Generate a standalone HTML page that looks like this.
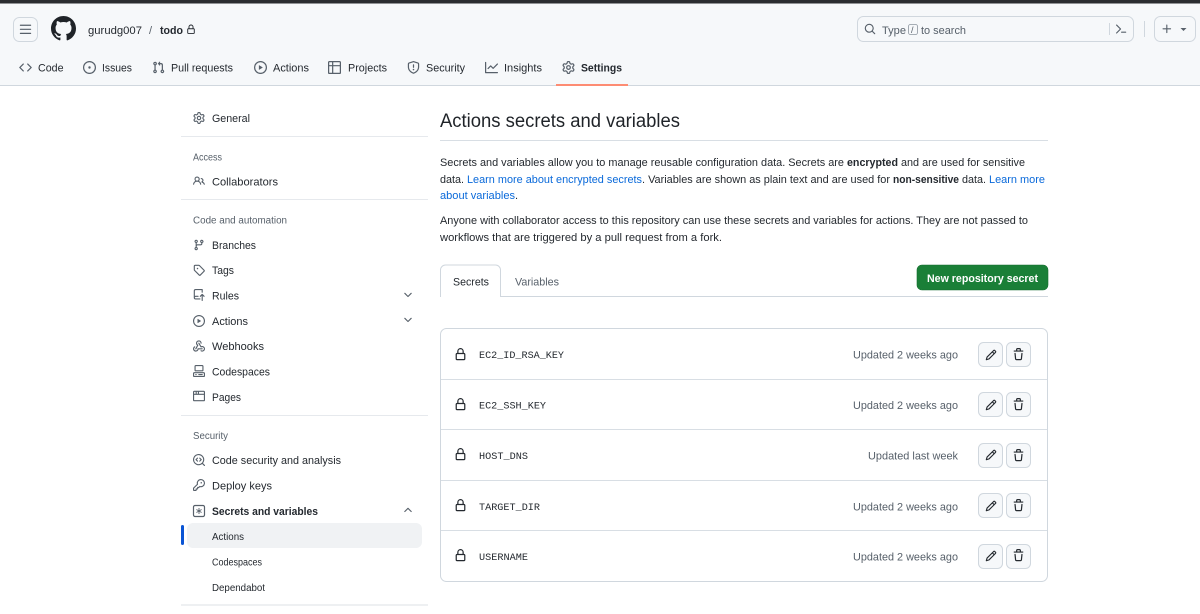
<!DOCTYPE html>
<html><head><meta charset="utf-8"><title>Actions secrets and variables</title>
<style>
html,body{margin:0;padding:0;width:1200px;height:614px;overflow:hidden;background:#fff}
svg{display:block}
text{font-family:"Liberation Sans",sans-serif;font-size:11px;fill:#24292f}
.m{fill:#57606a}
.b{font-weight:bold}
.l{fill:#0969da}
.h{font-size:10px;font-weight:bold;fill:#57606a}
.k{font-family:"Liberation Mono",monospace;font-size:10px}
.i{fill:#57606a}
.d{fill:#24292f}
</style></head><body>
<svg xmlns="http://www.w3.org/2000/svg" width="1200" height="614" viewBox="0 0 1200 614">
<defs>
<symbol id="gear" viewBox="0 0 16 16"><path d="M8 0a8.2 8.2 0 0 1 .701.031C9.444.095 9.99.645 10.16 1.29l.288 1.107c.018.066.079.158.212.224.231.114.454.243.668.386.123.082.233.09.299.071l1.103-.303c.644-.176 1.392.021 1.82.63.27.385.506.792.704 1.218.315.675.111 1.422-.364 1.891l-.814.806c-.049.048-.098.147-.088.294.016.257.016.515 0 .772-.01.147.038.246.088.294l.814.806c.475.469.679 1.216.364 1.891a7.977 7.977 0 0 1-.704 1.217c-.428.61-1.176.807-1.82.63l-1.102-.302c-.067-.019-.177-.011-.3.071a5.909 5.909 0 0 1-.668.386c-.133.066-.194.158-.211.224l-.29 1.106c-.168.646-.715 1.196-1.458 1.26a8.006 8.006 0 0 1-1.402 0c-.743-.064-1.289-.614-1.458-1.26l-.289-1.106c-.018-.066-.079-.158-.212-.224a5.738 5.738 0 0 1-.668-.386c-.123-.082-.233-.09-.299-.071l-1.103.303c-.644.176-1.392-.021-1.82-.63a8.12 8.12 0 0 1-.704-1.218c-.315-.675-.111-1.422.363-1.891l.815-.806c.05-.048.098-.147.088-.294a6.214 6.214 0 0 1 0-.772c.01-.147-.038-.246-.088-.294l-.815-.806C.635 6.045.431 5.298.746 4.623a7.92 7.92 0 0 1 .704-1.217c.428-.61 1.176-.807 1.82-.63l1.102.302c.067.019.177.011.3-.071.214-.143.437-.272.668-.386.133-.066.194-.158.211-.224l.29-1.106C6.009.645 6.556.095 7.299.03 7.53.01 7.764 0 8 0Zm-.571 1.525c-.036.003-.108.036-.137.146l-.289 1.105c-.147.561-.549.967-.998 1.189-.173.086-.34.183-.5.29-.417.278-.97.423-1.529.27l-1.103-.303c-.109-.03-.175.016-.195.045-.22.312-.412.644-.573.99-.014.031-.021.11.059.19l.815.806c.411.406.562.957.53 1.456a4.709 4.709 0 0 0 0 .582c.032.499-.119 1.05-.53 1.456l-.815.806c-.081.08-.073.159-.059.19.162.346.353.677.573.989.02.03.085.076.195.046l1.102-.303c.56-.153 1.113-.008 1.53.27.161.107.328.204.501.29.447.222.85.629.997 1.189l.289 1.105c.029.109.101.143.137.146a6.6 6.6 0 0 0 1.142 0c.036-.003.108-.036.137-.146l.289-1.105c.147-.561.549-.967.998-1.189.173-.086.34-.183.5-.29.417-.278.97-.423 1.529-.27l1.103.303c.109.029.175-.016.195-.045.22-.313.411-.644.573-.99.014-.031.021-.11-.059-.19l-.815-.806c-.411-.406-.562-.957-.53-1.456a4.709 4.709 0 0 0 0-.582c-.032-.499.119-1.05.53-1.456l.815-.806c.081-.08.073-.159.059-.19a6.464 6.464 0 0 0-.573-.989c-.02-.03-.085-.076-.195-.046l-1.102.303c-.56.153-1.113.008-1.53-.27a4.44 4.44 0 0 0-.501-.29c-.447-.222-.85-.629-.997-1.189l-.289-1.105c-.029-.11-.101-.143-.137-.146a6.6 6.6 0 0 0-1.142 0ZM11 8a3 3 0 1 1-6 0 3 3 0 0 1 6 0ZM9.5 8a1.5 1.5 0 1 0-3.001.001A1.5 1.5 0 0 0 9.5 8Z"/></symbol>
<symbol id="mark" viewBox="0 0 16 16"><path d="M8 0c4.42 0 8 3.58 8 8a8.013 8.013 0 0 1-5.45 7.59c-.4.08-.55-.17-.55-.38 0-.27.01-1.13.01-2.2 0-.75-.25-1.23-.54-1.48 1.78-.2 3.65-.88 3.65-3.95 0-.88-.31-1.59-.82-2.15.08-.2.36-1.02-.08-2.12 0 0-.67-.22-2.2.82-.64-.18-1.32-.27-2-.27-.68 0-1.36.09-2 .27-1.53-1.03-2.2-.82-2.2-.82-.44 1.1-.16 1.92-.08 2.12-.51.56-.82 1.28-.82 2.15 0 3.06 1.86 3.75 3.64 3.95-.23.2-.44.55-.51 1.07-.46.21-1.61.55-2.33-.66-.15-.24-.6-.83-1.23-.82-.67.01-.27.38.01.53.34.19.73.9.82 1.13.16.45.68 1.31 2.69.94 0 .67.01 1.3.01 1.49 0 .21-.15.45-.55.38A7.995 7.995 0 0 1 0 8c0-4.42 3.58-8 8-8Z"/></symbol>
<symbol id="code" viewBox="0 0 16 16"><path d="m11.28 3.22 4.25 4.25a.75.75 0 0 1 0 1.06l-4.25 4.25a.749.749 0 0 1-1.275-.326.749.749 0 0 1 .215-.734L13.94 8l-3.72-3.72a.749.749 0 0 1 .326-1.275.749.749 0 0 1 .734.215Zm-6.56 0a.751.751 0 0 1 1.042.018.751.751 0 0 1 .018 1.042L2.06 8l3.72 3.72a.749.749 0 0 1-.326 1.275.749.749 0 0 1-.734-.215L.47 8.53a.75.75 0 0 1 0-1.06Z"/></symbol>
<symbol id="issue" viewBox="0 0 16 16"><path d="M8 9.5a1.5 1.5 0 1 0 0-3 1.5 1.5 0 0 0 0 3Z"/><path d="M8 0a8 8 0 1 1 0 16A8 8 0 0 1 8 0ZM1.5 8a6.5 6.5 0 1 0 13 0 6.5 6.5 0 0 0-13 0Z"/></symbol>
<symbol id="pr" viewBox="0 0 16 16"><path d="M1.5 3.25a2.25 2.25 0 1 1 3 2.122v5.256a2.251 2.251 0 1 1-1.5 0V5.372A2.25 2.25 0 0 1 1.5 3.25Zm5.677-.177L9.573.677A.25.25 0 0 1 10 .854V2.5h1A2.5 2.5 0 0 1 13.5 5v5.628a2.251 2.251 0 1 1-1.5 0V5a1 1 0 0 0-1-1h-1v1.646a.25.25 0 0 1-.427.177L7.177 3.427a.25.25 0 0 1 0-.354ZM3.75 2.5a.75.75 0 1 0 0 1.5.75.75 0 0 0 0-1.5Zm0 9.5a.75.75 0 1 0 0 1.5.75.75 0 0 0 0-1.5Zm8.25.75a.75.75 0 1 0 1.5 0 .75.75 0 0 0-1.5 0Z"/></symbol>
<symbol id="play" viewBox="0 0 16 16"><path d="M8 0a8 8 0 1 1 0 16A8 8 0 0 1 8 0ZM1.5 8a6.5 6.5 0 1 0 13 0 6.5 6.5 0 0 0-13 0Zm4.879-2.773 4.264 2.559a.25.25 0 0 1 0 .428l-4.264 2.559A.25.25 0 0 1 6 10.559V5.442a.25.25 0 0 1 .379-.215Z"/></symbol>
<symbol id="table" viewBox="0 0 16 16"><path d="M0 1.75C0 .784.784 0 1.75 0h12.5C15.216 0 16 .784 16 1.75v12.5A1.75 1.75 0 0 1 14.25 16H1.75A1.75 1.75 0 0 1 0 14.25ZM6.5 6.5v8h7.75a.25.25 0 0 0 .25-.25V6.5Zm8-1.5V1.75a.25.25 0 0 0-.25-.25H6.5V5Zm-13 1.5v7.75c0 .138.112.25.25.25H5v-8ZM5 5V1.5H1.75a.25.25 0 0 0-.25.25V5Z"/></symbol>
<symbol id="shield" viewBox="0 0 16 16"><path d="M7.467.133a1.748 1.748 0 0 1 1.066 0l5.25 1.68A1.75 1.75 0 0 1 15 3.48V7c0 1.566-.32 3.182-1.303 4.682-.983 1.498-2.585 2.813-5.032 3.855a1.697 1.697 0 0 1-1.33 0c-2.447-1.042-4.049-2.357-5.032-3.855C1.32 10.182 1 8.566 1 7V3.48a1.75 1.75 0 0 1 1.217-1.667Zm.61 1.429a.25.25 0 0 0-.153 0l-5.25 1.68a.25.25 0 0 0-.174.238V7c0 1.358.275 2.666 1.057 3.86.784 1.194 2.121 2.34 4.366 3.297a.196.196 0 0 0 .154 0c2.245-.956 3.582-2.104 4.366-3.298C13.225 9.666 13.5 8.36 13.5 7V3.48a.251.251 0 0 0-.174-.237l-5.25-1.68ZM8.75 4.75v3a.75.75 0 0 1-1.5 0v-3a.75.75 0 0 1 1.5 0ZM9 10.5a1 1 0 1 1-2 0 1 1 0 0 1 2 0Z"/></symbol>
<symbol id="graph" viewBox="0 0 16 16"><path d="M1.5 1.75V13.5h13.75a.75.75 0 0 1 0 1.5H.75a.75.75 0 0 1-.75-.75V1.75a.75.75 0 0 1 1.5 0Zm14.28 2.53-5.25 5.25a.75.75 0 0 1-1.06 0L7 7.06 4.28 9.78a.751.751 0 0 1-1.042-.018.751.751 0 0 1-.018-1.042l3.25-3.25a.75.75 0 0 1 1.06 0L10 7.94l4.72-4.72a.751.751 0 0 1 1.042.018.751.751 0 0 1 .018 1.042Z"/></symbol>
<symbol id="bars" viewBox="0 0 16 16"><path d="M1 2.75A.75.75 0 0 1 1.75 2h12.5a.75.75 0 0 1 0 1.5H1.75A.75.75 0 0 1 1 2.75Zm0 5A.75.75 0 0 1 1.75 7h12.5a.75.75 0 0 1 0 1.5H1.75A.75.75 0 0 1 1 7.75ZM1.75 12h12.5a.75.75 0 0 1 0 1.5H1.75a.75.75 0 0 1 0-1.5Z"/></symbol>
<symbol id="lock" viewBox="0 0 16 16"><path d="M4 4a4 4 0 0 1 8 0v2h.25c.966 0 1.75.784 1.75 1.75v5.5A1.75 1.75 0 0 1 12.25 15h-8.5A1.75 1.75 0 0 1 2 13.25v-5.5C2 6.784 2.784 6 3.75 6H4Zm8.25 3.5h-8.5a.25.25 0 0 0-.25.25v5.5c0 .138.112.25.25.25h8.5a.25.25 0 0 0 .25-.25v-5.5a.25.25 0 0 0-.25-.25ZM10.5 6V4a2.5 2.5 0 1 0-5 0v2Z"/></symbol>
<symbol id="search" viewBox="0 0 16 16"><path d="M10.68 11.74a6 6 0 0 1-7.922-8.982 6 6 0 0 1 8.982 7.922l3.04 3.04a.749.749 0 0 1-.326 1.275.749.749 0 0 1-.734-.215ZM11.5 7a4.499 4.499 0 1 0-8.997 0A4.499 4.499 0 0 0 11.5 7Z"/></symbol>
<symbol id="plus" viewBox="0 0 16 16"><path d="M7.75 2a.75.75 0 0 1 .75.75V7h4.25a.75.75 0 0 1 0 1.5H8.5v4.25a.75.75 0 0 1-1.5 0V8.5H2.75a.75.75 0 0 1 0-1.5H7V2.75A.75.75 0 0 1 7.75 2Z"/></symbol>
<symbol id="pencil" viewBox="0 0 16 16"><path d="M11.013 1.427a1.75 1.75 0 0 1 2.474 0l1.086 1.086a1.75 1.75 0 0 1 0 2.474l-8.61 8.61c-.21.21-.47.364-.756.445l-3.251.93a.75.75 0 0 1-.927-.928l.929-3.25c.081-.286.235-.547.445-.758l8.61-8.61Zm.176 4.823L9.75 4.81l-6.286 6.287a.253.253 0 0 0-.064.108l-.558 1.953 1.953-.558a.253.253 0 0 0 .108-.064Zm1.238-3.763a.25.25 0 0 0-.354 0L10.811 3.75l1.439 1.44 1.263-1.263a.25.25 0 0 0 0-.354Z"/></symbol>
<symbol id="trash" viewBox="0 0 16 16"><path d="M11 1.75V3h2.25a.75.75 0 0 1 0 1.5H2.75a.75.75 0 0 1 0-1.5H5V1.75C5 .784 5.784 0 6.75 0h2.5C10.216 0 11 .784 11 1.75ZM4.496 6.675l.66 6.6a.25.25 0 0 0 .249.225h5.19a.25.25 0 0 0 .249-.225l.66-6.6a.75.75 0 0 1 1.492.149l-.66 6.6A1.748 1.748 0 0 1 10.595 15h-5.19a1.75 1.75 0 0 1-1.741-1.575l-.66-6.6a.75.75 0 1 1 1.492-.15ZM6.5 1.75V3h3V1.75a.25.25 0 0 0-.25-.25h-2.5a.25.25 0 0 0-.25.25Z"/></symbol>
<symbol id="down" viewBox="0 0 16 16"><path d="M12.78 5.22a.749.749 0 0 1 0 1.06l-4.25 4.25a.749.749 0 0 1-1.06 0L3.22 6.28a.749.749 0 1 1 1.06-1.06L8 8.939l3.72-3.719a.749.749 0 0 1 1.06 0Z"/></symbol>
<symbol id="up" viewBox="0 0 16 16"><path d="M3.22 10.53a.749.749 0 0 1 0-1.06l4.25-4.25a.749.749 0 0 1 1.06 0l4.25 4.25a.749.749 0 1 1-1.06 1.06L8 6.811 4.28 10.53a.749.749 0 0 1-1.06 0Z"/></symbol>
<symbol id="palette" viewBox="0 0 16 16"><path d="m6.354 8.04-4.773 4.773a.75.75 0 1 0 1.061 1.06L7.945 8.57a.75.75 0 0 0 0-1.06L2.642 2.206a.75.75 0 0 0-1.06 1.061L6.353 8.04ZM8.75 11.5a.75.75 0 0 0 0 1.5h5.5a.75.75 0 0 0 0-1.5h-5.5Z"/></symbol>
<symbol id="people" viewBox="0 0 16 16"><path d="M2 5.5a3.5 3.5 0 1 1 5.898 2.549 5.508 5.508 0 0 1 3.034 4.084.75.75 0 1 1-1.482.235 4 4 0 0 0-7.9 0 .75.75 0 0 1-1.482-.236A5.507 5.507 0 0 1 3.102 8.05 3.493 3.493 0 0 1 2 5.5ZM11 4a3.001 3.001 0 0 1 2.22 5.018 5.01 5.01 0 0 1 2.56 3.012.749.749 0 0 1-.885.954.752.752 0 0 1-.549-.514 3.507 3.507 0 0 0-2.522-2.372.75.75 0 0 1-.574-.73v-.352a.75.75 0 0 1 .416-.672A1.5 1.5 0 0 0 11 5.5.75.75 0 0 1 11 4Zm-5.5-.5a2 2 0 1 0-.001 3.999A2 2 0 0 0 5.5 3.5Z"/></symbol>
<symbol id="branch" viewBox="0 0 16 16"><path d="M9.5 3.25a2.25 2.25 0 1 1 3 2.122V6A2.5 2.5 0 0 1 10 8.5H6a1 1 0 0 0-1 1v1.128a2.251 2.251 0 1 1-1.5 0V5.372a2.25 2.25 0 1 1 1.5 0v1.836A2.493 2.493 0 0 1 6 7h4a1 1 0 0 0 1-1v-.628A2.25 2.25 0 0 1 9.5 3.25Zm-6 0a.75.75 0 1 0 1.5 0 .75.75 0 0 0-1.5 0Zm8.25-.75a.75.75 0 1 0 0 1.5.75.75 0 0 0 0-1.5ZM4.25 12a.75.75 0 1 0 0 1.5.75.75 0 0 0 0-1.5Z"/></symbol>
<symbol id="tag" viewBox="0 0 16 16"><path d="M1 7.775V2.75C1 1.784 1.784 1 2.75 1h5.025c.464 0 .91.184 1.238.513l6.25 6.25a1.75 1.75 0 0 1 0 2.474l-5.026 5.026a1.75 1.75 0 0 1-2.474 0l-6.25-6.25A1.752 1.752 0 0 1 1 7.775Zm1.5 0c0 .066.026.13.073.177l6.25 6.25a.25.25 0 0 0 .354 0l5.025-5.025a.25.25 0 0 0 0-.354l-6.25-6.25a.25.25 0 0 0-.177-.073H2.75a.25.25 0 0 0-.25.25ZM6 5a1 1 0 1 1 0 2 1 1 0 0 1 0-2Z"/></symbol>
<symbol id="rules" viewBox="0 0 16 16"><path d="M1 2.5A2.5 2.5 0 0 1 3.5 0h8.75a.75.75 0 0 1 .75.75v3.5a.75.75 0 0 1-1.5 0V1.5h-8a1 1 0 0 0-1 1v6.708A2.493 2.493 0 0 1 3.5 9h3.25a.75.75 0 0 1 0 1.5H3.5a1 1 0 0 0 0 2h5.75a.75.75 0 0 1 0 1.5H3.5A2.5 2.5 0 0 1 1 11.5Zm13.23 7.79h-.001l-1.224-1.224v6.184a.75.75 0 0 1-1.5 0V9.066L10.28 10.29a.75.75 0 0 1-1.06-1.061l2.505-2.504a.75.75 0 0 1 1.06 0L15.29 9.23a.751.751 0 0 1-.018 1.042.751.751 0 0 1-1.042.018Z"/></symbol>
<symbol id="webhook" viewBox="0 0 16 16"><path d="M5.5 4.25a2.25 2.25 0 0 1 4.5 0 .75.75 0 0 0 1.5 0 3.75 3.75 0 1 0-6.14 2.889l-2.272 4.258a.75.75 0 0 0 1.324.706L7 7.25a.75.75 0 0 0-.309-1.015A2.25 2.25 0 0 1 5.5 4.25Z"/><path d="M7.364 3.607a.75.75 0 0 1 1.03.257l2.608 4.349a3.75 3.75 0 1 1-.628 6.785.75.75 0 0 1 .752-1.299 2.25 2.25 0 1 0-.033-3.88.75.75 0 0 1-1.03-.256L7.107 4.636a.75.75 0 0 1 .257-1.03Z"/><path d="M2.9 8.776A.75.75 0 0 1 2.625 9.8 2.25 2.25 0 1 0 6 11.75a.75.75 0 0 1 .75-.751h5.5a.75.75 0 0 1 0 1.5H7.425a3.751 3.751 0 1 1-5.55-3.998.75.75 0 0 1 1.024.274Z"/></symbol>
<symbol id="cs" viewBox="0 0 16 16"><path d="M0 11.25c0-.966.784-1.75 1.75-1.75h12.5c.966 0 1.75.784 1.75 1.75v3A1.75 1.75 0 0 1 14.25 16H1.75A1.75 1.75 0 0 1 0 14.25Zm2-9.5C2 .784 2.784 0 3.75 0h8.5C13.216 0 14 .784 14 1.75v5a1.75 1.75 0 0 1-1.75 1.75h-8.5A1.75 1.75 0 0 1 2 6.75Zm1.75-.25a.25.25 0 0 0-.25.25v5c0 .138.112.25.25.25h8.5a.25.25 0 0 0 .25-.25v-5a.25.25 0 0 0-.25-.25Zm-2 9.5a.25.25 0 0 0-.25.25v3c0 .138.112.25.25.25h12.5a.25.25 0 0 0 .25-.25v-3a.25.25 0 0 0-.25-.25Z"/><path d="M7 12.75a.75.75 0 0 1 .75-.75h4.5a.75.75 0 0 1 0 1.5h-4.5a.75.75 0 0 1-.75-.75Zm-4 0a.75.75 0 0 1 .75-.75h.5a.75.75 0 0 1 0 1.5h-.5a.75.75 0 0 1-.75-.75Z"/></symbol>
<symbol id="browser" viewBox="0 0 16 16"><path d="M0 2.75C0 1.784.784 1 1.75 1h12.5c.966 0 1.75.784 1.75 1.75v10.5A1.75 1.75 0 0 1 14.25 15H1.75A1.75 1.75 0 0 1 0 13.25ZM14.5 6.5h-13v6.75c0 .138.112.25.25.25h12.5a.25.25 0 0 0 .25-.25Zm-13-1.5h2V2.5H1.75a.25.25 0 0 0-.25.25ZM5 5h1.5V2.5H5Zm3 0h6.5V2.75a.25.25 0 0 0-.25-.25H8Z"/></symbol>
<symbol id="scan" viewBox="0 0 16 16"><path d="M8.47 4.97a.75.75 0 0 0 0 1.06L9.94 7.5 8.47 8.97a.75.75 0 1 0 1.06 1.06l2-2a.75.75 0 0 0 0-1.06l-2-2a.75.75 0 0 0-1.06 0ZM6.53 6.03a.75.75 0 0 0-1.06-1.06l-2 2a.75.75 0 0 0 0 1.06l2 2a.75.75 0 1 0 1.06-1.06L5.06 7.5l1.47-1.47Z"/><path d="M12.246 13.307a7.501 7.501 0 1 1 1.06-1.06l2.474 2.473a.749.749 0 0 1-.326 1.275.749.749 0 0 1-.734-.215ZM1.5 7.5a6.002 6.002 0 0 0 3.608 5.504 6.002 6.002 0 0 0 6.486-1.117.748.748 0 0 1 .292-.293A6 6 0 1 0 1.5 7.5Z"/></symbol>
<symbol id="key" viewBox="0 0 16 16"><path d="M10.5 0a5.499 5.499 0 1 1-1.288 10.848l-.932.932a.749.749 0 0 1-.53.22H7v.75a.749.749 0 0 1-.22.53l-.5.5a.749.749 0 0 1-.53.22H5v.75a.749.749 0 0 1-.22.53l-.5.5a.749.749 0 0 1-.53.22h-2A1.75 1.75 0 0 1 0 14.25v-2c0-.199.079-.389.22-.53l4.932-4.932A5.5 5.5 0 0 1 10.5 0Zm-4 5.5c-.001.431.069.86.205 1.269a.75.75 0 0 1-.181.768L1.5 12.56v1.69c0 .138.112.25.25.25h1.69l.06-.06v-1.19a.75.75 0 0 1 .75-.75h1.19l.06-.06v-1.19a.75.75 0 0 1 .75-.75h1.19l1.023-1.025a.75.75 0 0 1 .768-.18A4 4 0 1 0 6.5 5.5ZM11 6a1 1 0 1 1 0-2 1 1 0 0 1 0 2Z"/></symbol>
</defs>

<!-- header -->
<rect width="1200" height="85" fill="#f6f8fa"/>
<rect width="1200" height="3.5" fill="#2b2d30"/>
<rect y="85" width="1200" height="1" fill="#d0d7de"/>
<rect x="13.5" y="17.5" width="24" height="24" rx="6" fill="#f6f8fa" stroke="#d0d7de"/>
<use href="#bars" x="19" y="23" width="13" height="13" class="i"/>
<use href="#mark" x="51" y="16" width="25" height="25" fill="#1f2328"/>
<text x="88" y="34" textLength="54" lengthAdjust="spacingAndGlyphs" class="m" style="fill:#24292f">gurudg007</text>
<text x="149" y="34" class="m">/</text>
<text x="160" y="34" textLength="23" lengthAdjust="spacingAndGlyphs" style="font-weight:bold;fill:#24292f">todo</text>
<use href="#lock" x="186" y="24" width="10" height="11" class="d"/>

<use href="#code" x="19" y="61" width="13" height="13" class="i"/>
<text x="38" y="71.500" textLength="25.500" lengthAdjust="spacingAndGlyphs">Code</text>
<use href="#issue" x="83" y="61" width="13" height="13" class="i"/>
<text x="102" y="71.500" textLength="30" lengthAdjust="spacingAndGlyphs">Issues</text>
<use href="#pr" x="152" y="61" width="13" height="13" class="i"/>
<text x="171" y="71.500" textLength="62" lengthAdjust="spacingAndGlyphs">Pull requests</text>
<use href="#play" x="254" y="61" width="13" height="13" class="i"/>
<text x="273" y="71.500" textLength="36" lengthAdjust="spacingAndGlyphs">Actions</text>
<use href="#table" x="328" y="61" width="13" height="13" class="i"/>
<text x="348" y="71.500" textLength="39" lengthAdjust="spacingAndGlyphs">Projects</text>
<use href="#shield" x="407" y="61" width="13" height="13" class="i"/>
<text x="426" y="71.500" textLength="39" lengthAdjust="spacingAndGlyphs">Security</text>
<use href="#graph" x="485" y="61" width="13" height="13" class="i"/>
<text x="504" y="71.500" textLength="38" lengthAdjust="spacingAndGlyphs">Insights</text>
<use href="#gear" x="562" y="61" width="13" height="13" class="i"/>
<text x="581" y="71.500" textLength="41" lengthAdjust="spacingAndGlyphs" class="b">Settings</text>
<rect x="556" y="84" width="72" height="2" fill="#fd8c73"/>

<rect x="857.500" y="16.500" width="276" height="25" rx="6" fill="#f6f8fa" stroke="#d0d7de"/>
<use href="#search" x="864" y="23" width="12" height="12" class="i"/>
<text x="882" y="34" textLength="24" lengthAdjust="spacingAndGlyphs" class="m">Type</text>
<rect x="908.500" y="24.500" width="9" height="10" rx="2" fill="none" stroke="#8c959f" stroke-width=".8"/>
<text x="911" y="33" style="font-size:9px" class="m">/</text>
<text x="921" y="34" textLength="45" lengthAdjust="spacingAndGlyphs" class="m">to search</text>
<rect x="1109" y="23" width="1" height="12" fill="#d0d7de"/>
<use href="#palette" x="1115" y="23" width="12" height="12" class="i"/>
<rect x="1144" y="21" width="1" height="16" fill="#d0d7de"/>
<rect x="1154.500" y="16.500" width="41" height="25" rx="6" fill="#f6f8fa" stroke="#d0d7de"/>
<use href="#plus" x="1161" y="23" width="12" height="12" class="i"/>
<path d="M1180.500 28h6l-3 3z" fill="#57606a"/>

<!-- sidebar -->
<use href="#gear" x="193" y="112" width="12" height="12" class="i"/>
<text x="212" y="122" textLength="38" lengthAdjust="spacingAndGlyphs">General</text>
<rect x="181" y="136" width="247" height="1" fill="#e6e9ed"/>
<text x="193" y="160.500" textLength="29" lengthAdjust="spacingAndGlyphs" class="h" style="font-weight:normal">Access</text>
<use href="#people" x="193" y="175" width="12" height="12" class="i"/>
<text x="212" y="185.500" textLength="66" lengthAdjust="spacingAndGlyphs">Collaborators</text>
<rect x="181" y="199" width="247" height="1" fill="#e6e9ed"/>
<text x="193" y="223.500" textLength="94" lengthAdjust="spacingAndGlyphs" class="h" style="font-weight:normal">Code and automation</text>
<use href="#branch" x="193" y="239" width="12" height="12" class="i"/>
<text x="212" y="249" textLength="44" lengthAdjust="spacingAndGlyphs">Branches</text>
<use href="#tag" x="193" y="264" width="12" height="12" class="i"/>
<text x="212" y="274" textLength="22" lengthAdjust="spacingAndGlyphs">Tags</text>
<use href="#rules" x="193" y="289" width="12" height="12" class="i"/>
<text x="212" y="299.500" textLength="27" lengthAdjust="spacingAndGlyphs">Rules</text>
<use href="#down" x="402" y="289" width="12" height="12" class="i"/>
<use href="#play" x="193" y="315" width="12" height="12" class="i"/>
<text x="212" y="325" textLength="36" lengthAdjust="spacingAndGlyphs">Actions</text>
<use href="#down" x="402" y="314" width="12" height="12" class="i"/>
<use href="#webhook" x="193" y="340" width="12" height="12" class="i"/>
<text x="212" y="350" textLength="52" lengthAdjust="spacingAndGlyphs">Webhooks</text>
<use href="#cs" x="193" y="365" width="12" height="12" class="i"/>
<text x="212" y="375.500" textLength="58" lengthAdjust="spacingAndGlyphs">Codespaces</text>
<use href="#browser" x="193" y="390" width="12" height="12" class="i"/>
<text x="212" y="401" textLength="29" lengthAdjust="spacingAndGlyphs">Pages</text>
<rect x="181" y="415" width="247" height="1" fill="#e6e9ed"/>
<text x="193" y="439" textLength="35" lengthAdjust="spacingAndGlyphs" class="h" style="font-weight:normal">Security</text>
<use href="#scan" x="193" y="454" width="12" height="12" class="i"/>
<text x="212" y="464" textLength="129" lengthAdjust="spacingAndGlyphs">Code security and analysis</text>
<use href="#key" x="193" y="479" width="12" height="12" class="i"/>
<text x="212" y="489.500" textLength="60" lengthAdjust="spacingAndGlyphs">Deploy keys</text>
<rect x="193.500" y="505.500" width="11" height="11" rx="1.500" fill="none" stroke="#57606a" stroke-width="1.200"/>
<path d="M199 508v6M196.400 509.500l5.200 3M196.400 512.500l5.200-3" stroke="#57606a" stroke-width=".9" fill="none"/>
<text x="212" y="515" textLength="106" lengthAdjust="spacingAndGlyphs" class="b">Secrets and variables</text>
<use href="#up" x="402" y="504" width="12" height="12" class="i"/>
<rect x="187" y="523" width="235" height="25" rx="6" fill="#f0f2f4"/>
<rect x="181" y="525" width="3" height="20" rx="1.500" fill="#0a54d4"/>
<text x="212" y="540" textLength="32" lengthAdjust="spacingAndGlyphs" style="font-size:10px">Actions</text>
<text x="212" y="565.500" textLength="50" lengthAdjust="spacingAndGlyphs" style="font-size:10px">Codespaces</text>
<text x="212" y="591" textLength="53" lengthAdjust="spacingAndGlyphs" style="font-size:10px">Dependabot</text>
<rect x="181" y="604" width="247" height="2" fill="#eef0f2"/>

<!-- main -->
<text x="440" y="127" textLength="240" lengthAdjust="spacingAndGlyphs" style="font-size:19px;fill:#1f2328">Actions secrets and variables</text>
<rect x="440" y="140" width="608" height="1" fill="#d8dee4"/>

<text x="440" y="166" textLength="404" lengthAdjust="spacingAndGlyphs">Secrets and variables allow you to manage reusable configuration data. Secrets are</text>
<text x="847" y="166" textLength="51" lengthAdjust="spacingAndGlyphs" class="b">encrypted</text>
<text x="901" y="166" textLength="124" lengthAdjust="spacingAndGlyphs">and are used for sensitive</text>
<text x="440" y="183" textLength="24" lengthAdjust="spacingAndGlyphs">data.</text>
<text x="467" y="183" textLength="175" lengthAdjust="spacingAndGlyphs" class="l">Learn more about encrypted secrets</text>
<text x="642" y="183" textLength="248" lengthAdjust="spacingAndGlyphs">. Variables are shown as plain text and are used for</text>
<text x="893" y="183" textLength="66" lengthAdjust="spacingAndGlyphs" class="b">non-sensitive</text>
<text x="962" y="183" textLength="24" lengthAdjust="spacingAndGlyphs">data.</text>
<text x="989" y="183" textLength="56" lengthAdjust="spacingAndGlyphs" class="l">Learn more</text>
<text x="440" y="199" textLength="75" lengthAdjust="spacingAndGlyphs" class="l">about variables</text>
<text x="515" y="199">.</text>
<text x="440" y="224" textLength="588" lengthAdjust="spacingAndGlyphs">Anyone with collaborator access to this repository can use these secrets and variables for actions. They are not passed to</text>
<text x="440" y="241" textLength="282" lengthAdjust="spacingAndGlyphs">workflows that are triggered by a pull request from a fork.</text>

<!-- tabs -->
<path d="M501 296.500H1048" stroke="#d0d7de" fill="none"/>
<path d="M440.500 297V270a5 5 0 0 1 5-5h50a5 5 0 0 1 5 5v27" fill="#fff" stroke="#d0d7de"/>
<text x="453" y="285.500" textLength="36" lengthAdjust="spacingAndGlyphs">Secrets</text>
<text x="515" y="285.500" textLength="44" lengthAdjust="spacingAndGlyphs" class="m">Variables</text>
<rect x="917" y="265" width="131" height="25" rx="5" fill="#1a7f37" stroke="#176f30" stroke-width=".6"/>
<text x="927" y="282" textLength="111" lengthAdjust="spacingAndGlyphs" class="b" style="fill:#fff">New repository secret</text>

<!-- table -->
<rect x="440.500" y="328.500" width="607" height="253" rx="6" fill="#fff" stroke="#d0d7de"/>
<rect x="441" y="379" width="606" height="1" fill="#d8dee4"/>
<rect x="441" y="429" width="606" height="1" fill="#d8dee4"/>
<rect x="441" y="480" width="606" height="1" fill="#d8dee4"/>
<rect x="441" y="530" width="606" height="1" fill="#d8dee4"/>

<use href="#lock" x="454" y="348" width="13" height="13" class="d"/>
<text x="479" y="358" textLength="85" lengthAdjust="spacingAndGlyphs" class="k">EC2_ID_RSA_KEY</text>
<text x="853" y="358.500" textLength="105" lengthAdjust="spacingAndGlyphs" class="m">Updated 2 weeks ago</text>
<rect x="978.500" y="342.500" width="24" height="24" rx="5" fill="#f6f8fa" stroke="#d0d7de"/>
<use href="#pencil" x="985" y="349" width="12" height="12" class="d"/>
<rect x="1006.500" y="342.500" width="24" height="24" rx="5" fill="#f6f8fa" stroke="#d0d7de"/>
<use href="#trash" x="1012" y="348" width="13" height="13" class="d"/>

<use href="#lock" x="454" y="398" width="13" height="13" class="d"/>
<text x="479" y="408.500" textLength="67" lengthAdjust="spacingAndGlyphs" class="k">EC2_SSH_KEY</text>
<text x="853" y="409" textLength="105" lengthAdjust="spacingAndGlyphs" class="m">Updated 2 weeks ago</text>
<rect x="978.500" y="392.500" width="24" height="24" rx="5" fill="#f6f8fa" stroke="#d0d7de"/>
<use href="#pencil" x="985" y="399" width="12" height="12" class="d"/>
<rect x="1006.500" y="392.500" width="24" height="24" rx="5" fill="#f6f8fa" stroke="#d0d7de"/>
<use href="#trash" x="1012" y="398" width="13" height="13" class="d"/>

<use href="#lock" x="454" y="448" width="13" height="13" class="d"/>
<text x="479" y="459" textLength="49" lengthAdjust="spacingAndGlyphs" class="k">HOST_DNS</text>
<text x="868" y="459.500" textLength="90" lengthAdjust="spacingAndGlyphs" class="m">Updated last week</text>
<rect x="978.500" y="443.500" width="24" height="24" rx="5" fill="#f6f8fa" stroke="#d0d7de"/>
<use href="#pencil" x="985" y="449" width="12" height="12" class="d"/>
<rect x="1006.500" y="443.500" width="24" height="24" rx="5" fill="#f6f8fa" stroke="#d0d7de"/>
<use href="#trash" x="1012" y="449" width="13" height="13" class="d"/>

<use href="#lock" x="454" y="499" width="13" height="13" class="d"/>
<text x="479" y="510" textLength="61" lengthAdjust="spacingAndGlyphs" class="k">TARGET_DIR</text>
<text x="853" y="510.500" textLength="105" lengthAdjust="spacingAndGlyphs" class="m">Updated 2 weeks ago</text>
<rect x="978.500" y="493.500" width="24" height="24" rx="5" fill="#f6f8fa" stroke="#d0d7de"/>
<use href="#pencil" x="985" y="500" width="12" height="12" class="d"/>
<rect x="1006.500" y="493.500" width="24" height="24" rx="5" fill="#f6f8fa" stroke="#d0d7de"/>
<use href="#trash" x="1012" y="499" width="13" height="13" class="d"/>

<use href="#lock" x="454" y="549" width="13" height="13" class="d"/>
<text x="479" y="560" textLength="49" lengthAdjust="spacingAndGlyphs" class="k">USERNAME</text>
<text x="853" y="560.500" textLength="105" lengthAdjust="spacingAndGlyphs" class="m">Updated 2 weeks ago</text>
<rect x="978.500" y="544.500" width="24" height="24" rx="5" fill="#f6f8fa" stroke="#d0d7de"/>
<use href="#pencil" x="985" y="550" width="12" height="12" class="d"/>
<rect x="1006.500" y="544.500" width="24" height="24" rx="5" fill="#f6f8fa" stroke="#d0d7de"/>
<use href="#trash" x="1012" y="549" width="13" height="13" class="d"/>
</svg>
</body></html>
